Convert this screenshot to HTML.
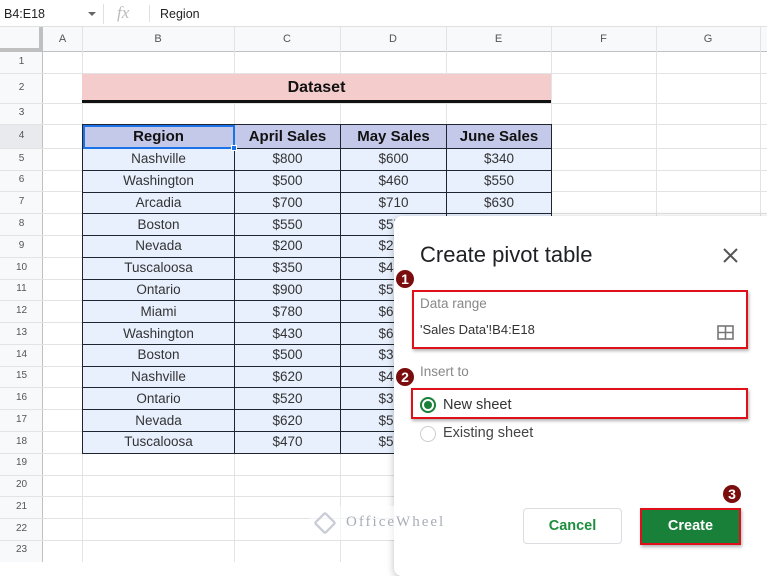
<!DOCTYPE html>
<html><head><style>
*{box-sizing:border-box;margin:0;padding:0}
body{width:767px;height:562px;overflow:hidden;background:#fff;font-family:"Liberation Sans",Arial,sans-serif;position:relative;color:#222}
.a{position:absolute}
.vl{position:absolute;top:27px;bottom:0;width:1px;background:#e2e3e3}
.hl{position:absolute;left:0;right:0;height:1px;background:#e2e3e3}
.rn{position:absolute;left:0;width:43px;text-align:center;font-size:10px;color:#555}
.cn{position:absolute;top:27px;height:25px;line-height:25px;text-align:center;font-size:11px;color:#555}
table.d{position:absolute;left:82px;top:124px;border-collapse:collapse;table-layout:fixed;width:469px;border:1.5px solid #5b8fe6}
table.d td{border:1px solid #1f2530;text-align:center;font-size:13.5px;color:#333;background:#e8f0fe;height:21.77px;padding:0;line-height:20px}
table.d tr:first-child td{background:#c5c9e9;font-weight:bold;font-size:15px;color:#111;height:24px}
.badge{position:absolute;width:18px;height:18px;border-radius:50%;background:#7a0e0e;color:#fff;font-size:14px;font-weight:bold;text-align:center;line-height:18px}
</style></head><body>
<div class="a" style="left:0;top:0;width:767px;height:27px;border-bottom:1px solid #e0e0e0;background:#fff"></div>
<div class="a" style="left:4px;top:7px;font-size:12.5px;color:#222">B4:E18</div>
<div class="a" style="left:88px;top:12px;width:0;height:0;border-left:4px solid transparent;border-right:4px solid transparent;border-top:4px solid #666"></div>
<div class="a" style="left:103px;top:4px;width:1px;height:20px;background:#e0e0e0"></div>
<div class="a" style="left:117px;top:3px;font-size:17px;font-style:italic;color:#bbb;font-family:'Liberation Serif',serif">fx</div>
<div class="a" style="left:149px;top:5px;width:1px;height:17px;background:#e0e0e0"></div>
<div class="a" style="left:160px;top:7px;font-size:12.5px;color:#222">Region</div>
<div class="a" style="left:0;top:27px;width:767px;height:25px;background:#f8f9fa;border-bottom:1px solid #c0c0c0"></div>
<div class="a" style="left:0;top:27px;width:43px;height:535px;background:#f8f9fa;border-right:1px solid #c0c0c0"></div>
<div class="a" style="left:0;top:124px;width:42px;height:24px;background:#e8eaed"></div>
<div class="a" style="left:0;top:27px;width:43px;height:25px;border-right:4px solid #c0c0c0;border-bottom:4px solid #c0c0c0"></div>
<div class="vl" style="left:82px"></div><div class="vl" style="left:234px"></div><div class="vl" style="left:340px"></div><div class="vl" style="left:446px"></div><div class="vl" style="left:551px"></div><div class="vl" style="left:656px"></div><div class="vl" style="left:760px"></div>
<div class="cn" style="left:43px;width:39px">A</div>
<div class="cn" style="left:82px;width:152px">B</div>
<div class="cn" style="left:234px;width:106px">C</div>
<div class="cn" style="left:340px;width:106px">D</div>
<div class="cn" style="left:446px;width:105px">E</div>
<div class="cn" style="left:551px;width:105px">F</div>
<div class="cn" style="left:656px;width:104px">G</div>
<div class="hl" style="top:73px"></div><div class="hl" style="top:103px"></div><div class="hl" style="top:124px"></div><div class="hl" style="top:148px"></div>
<div class="hl" style="top:170px"></div><div class="hl" style="top:191px"></div><div class="hl" style="top:213px"></div><div class="hl" style="top:235px"></div><div class="hl" style="top:257px"></div><div class="hl" style="top:279px"></div><div class="hl" style="top:300px"></div><div class="hl" style="top:322px"></div><div class="hl" style="top:344px"></div><div class="hl" style="top:366px"></div><div class="hl" style="top:387px"></div><div class="hl" style="top:409px"></div><div class="hl" style="top:431px"></div><div class="hl" style="top:453px"></div><div class="hl" style="top:475px"></div><div class="hl" style="top:496px"></div><div class="hl" style="top:518px"></div><div class="hl" style="top:540px"></div>
<div class="rn" style="top:56px">1</div><div class="rn" style="top:82px">2</div><div class="rn" style="top:107px">3</div><div class="rn" style="top:130px">4</div>
<div class="rn" style="top:153px">5</div><div class="rn" style="top:174px">6</div><div class="rn" style="top:196px">7</div><div class="rn" style="top:218px">8</div><div class="rn" style="top:240px">9</div><div class="rn" style="top:262px">10</div><div class="rn" style="top:283px">11</div><div class="rn" style="top:305px">12</div><div class="rn" style="top:327px">13</div><div class="rn" style="top:349px">14</div><div class="rn" style="top:370px">15</div><div class="rn" style="top:392px">16</div><div class="rn" style="top:414px">17</div><div class="rn" style="top:436px">18</div><div class="rn" style="top:457px">19</div><div class="rn" style="top:479px">20</div><div class="rn" style="top:501px">21</div><div class="rn" style="top:523px">22</div><div class="rn" style="top:544px">23</div>
<div class="a" style="left:82px;top:74px;width:469px;height:26px;background:#f4cccc;text-align:center;font-weight:bold;font-size:16px;line-height:28px;color:#111">Dataset</div>
<div class="a" style="left:82px;top:100px;width:469px;height:3px;background:#111"></div>
<table class="d">
<colgroup><col style="width:152px"><col style="width:106px"><col style="width:106px"><col style="width:105px"></colgroup>
<tr><td style="outline:2px solid #1a73e8;outline-offset:-2px">Region</td><td>April Sales</td><td>May Sales</td><td>June Sales</td></tr>
<tr><td>Nashville</td><td>$800</td><td>$600</td><td>$340</td></tr>
<tr><td>Washington</td><td>$500</td><td>$460</td><td>$550</td></tr>
<tr><td>Arcadia</td><td>$700</td><td>$710</td><td>$630</td></tr>
<tr><td>Boston</td><td>$550</td><td>$570</td><td></td></tr>
<tr><td>Nevada</td><td>$200</td><td>$280</td><td></td></tr>
<tr><td>Tuscaloosa</td><td>$350</td><td>$400</td><td></td></tr>
<tr><td>Ontario</td><td>$900</td><td>$500</td><td></td></tr>
<tr><td>Miami</td><td>$780</td><td>$600</td><td></td></tr>
<tr><td>Washington</td><td>$430</td><td>$600</td><td></td></tr>
<tr><td>Boston</td><td>$500</td><td>$350</td><td></td></tr>
<tr><td>Nashville</td><td>$620</td><td>$400</td><td></td></tr>
<tr><td>Ontario</td><td>$520</td><td>$390</td><td></td></tr>
<tr><td>Nevada</td><td>$620</td><td>$520</td><td></td></tr>
<tr><td>Tuscaloosa</td><td>$470</td><td>$520</td><td></td></tr>
</table>
<div class="a" style="left:231px;top:145px;width:6px;height:6px;background:#1a73e8;border:1px solid #fff"></div>
<!-- dialog -->
<div class="a" style="left:394px;top:216px;width:380px;height:360px;background:#fff;border-radius:8px;box-shadow:0 2px 8px rgba(0,0,0,.25)"></div>
<div class="a" style="left:420px;top:242px;font-size:22px;color:#202124">Create pivot table</div>
<svg class="a" style="left:722px;top:247px" width="17" height="17" viewBox="0 0 17 17"><path d="M2 2L15 15M15 2L2 15" stroke="#555" stroke-width="2"/></svg>
<div class="a" style="left:412px;top:290px;width:336px;height:59px;border:2px solid #e0101a;box-shadow:1px 2px 3px rgba(0,0,0,.3)"></div>
<div class="a" style="left:420px;top:296px;font-size:13.5px;color:#888">Data range</div>
<div class="a" style="left:420px;top:322px;font-size:13px;color:#333">'Sales Data'!B4:E18</div>
<svg class="a" style="left:717px;top:325px" width="17" height="15" viewBox="0 0 17 15"><rect x="1" y="1" width="15" height="13" fill="none" stroke="#777" stroke-width="1.6"/><path d="M8.5 1V14M1 7.5H16" stroke="#777" stroke-width="1.6"/></svg>
<div class="a" style="left:420px;top:364px;font-size:13.5px;color:#888">Insert to</div>
<div class="a" style="left:411px;top:388px;width:337px;height:31px;border:2px solid #e0101a;box-shadow:1px 2px 3px rgba(0,0,0,.3)"></div>
<div class="a" style="left:420px;top:397px;width:16px;height:16px;border-radius:50%;border:2px solid #188038"></div>
<div class="a" style="left:424px;top:401px;width:8px;height:8px;border-radius:50%;background:#188038"></div>
<div class="a" style="left:443px;top:397px;font-size:14.5px;color:#333">New sheet</div>
<div class="a" style="left:420px;top:426px;width:16px;height:16px;border-radius:50%;border:1.5px solid #ccc"></div>
<div class="a" style="left:443px;top:425px;font-size:14.5px;color:#444">Existing sheet</div>
<div class="badge" style="left:396px;top:270px">1</div>
<div class="badge" style="left:396px;top:368px">2</div>
<div class="badge" style="left:723px;top:485px">3</div>
<div class="a" style="left:523px;top:508px;width:99px;height:36px;border:1px solid #dadce0;border-radius:4px;text-align:center;line-height:34px;font-size:14.5px;font-weight:bold;color:#1e8e3e">Cancel</div>
<div class="a" style="left:640px;top:508px;width:101px;height:37px;background:#188038;border:2px solid #e0101a;text-align:center;line-height:33px;font-size:14.5px;font-weight:bold;color:#fff;box-shadow:1px 2px 3px rgba(0,0,0,.3)">Create</div>
<!-- watermark on top -->
<div class="a" style="left:310px;top:506px;width:150px;height:34px;background:rgba(255,255,255,.6)"></div>
<div class="a" style="left:314px;top:512px;width:22px;height:22px;border:3px solid #c9ccd6;transform:rotate(45deg) scale(.75);border-radius:3px"></div>
<div class="a" style="left:346px;top:514px;font-family:'Liberation Serif',serif;font-size:15px;letter-spacing:2px;color:#a9adb9">OfficeWheel</div>
</body></html>
